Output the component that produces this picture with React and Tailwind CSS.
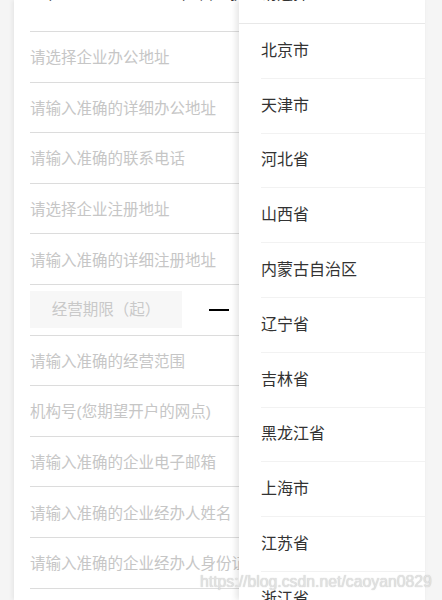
const fields = [
    "请选择企业办公地址",
    "请输入准确的详细办公地址",
    "请输入准确的联系电话",
    "请选择企业注册地址",
    "请输入准确的详细注册地址",
    null,
    "请输入准确的经营范围",
    "机构号(您期望开户的网点)",
    "请输入准确的企业电子邮箱",
    "请输入准确的企业经办人姓名",
    "请输入准确的企业经办人身份证号码",
    "请输入准确的企业经办人手机号",
]

const provinces = [
    "北京市", "天津市", "河北省", "山西省", "内蒙古自治区", "辽宁省",
    "吉林省", "黑龙江省", "上海市", "江苏省", "浙江省",
]

function FieldRow({ text }) {
    if (text === null) {
        return (
            <div className="h-[50.6px] border-b border-[#dcdcdc] flex items-center">
                <div className="w-[152px] h-[37px] bg-[#f7f7f7] flex items-center justify-center text-[15.5px] text-[#c9c9c9]">
                    经营期限（起）
                </div>
                <div className="ml-[27px] w-[20px] h-[2px] bg-black" />
            </div>
        )
    }
    return (
        <div className="h-[50.6px] pt-[2px] border-b border-[#dcdcdc] flex items-center whitespace-nowrap overflow-hidden text-[15.5px] text-[#c6c6c6]">
            {text}
        </div>
    )
}

export default function App() {
    return (
        <div
            className="relative w-[442px] h-[600px] overflow-hidden bg-[#f5f5f5]"
            style={{ fontFamily: '"Liberation Sans", "Noto Sans CJK SC", sans-serif' }}>
            <div className="ml-[14px] w-[411px] h-full bg-white pl-[16px] shadow-[-2px_0_4px_rgba(0,0,0,0.06)]">
                {/* bottom of the row above, scrolled out of view */}
                <div className="h-[32px] border-b border-[#dcdcdc] overflow-hidden flex items-start">
                    <div className="-mt-[18px] ml-[6px] text-[16px] text-[#333] whitespace-nowrap">
                        （<span className="inline-block w-[130px]" />）营业执照
                    </div>
                </div>
                {fields.map((f, i) => (
                    <FieldRow key={i} text={f} />
                ))}
            </div>

            {/* province picker */}
            <div className="absolute left-[239px] top-0 w-[186px] h-full bg-white shadow-[-3px_0_6px_rgba(0,0,0,0.1)]">
                <div className="h-[24px] border-b border-[#e8e8e8] overflow-hidden flex items-start">
                    <div className="-mt-[18px] ml-[22px] text-[16px] text-[#333]">请选择</div>
                </div>
                {provinces.map(p => (
                    <div key={p} className="pl-[22px]">
                        <div className="h-[54.8px] border-b border-[#f2f2f2] flex items-center text-[16px] text-[#333]">
                            {p}
                        </div>
                    </div>
                ))}
            </div>

            <div className="absolute left-[200px] top-[570px] text-[15.8px] text-[#e2e2e2] whitespace-nowrap [text-shadow:0_0_1px_rgba(150,150,150,0.6)]">
                https://blog.csdn.net/caoyan0829
            </div>
        </div>
    )
}
